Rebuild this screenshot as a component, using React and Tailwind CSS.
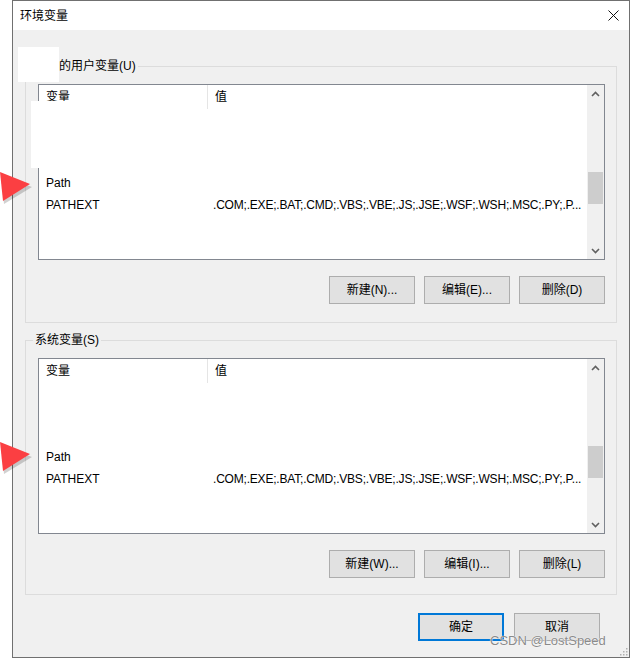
import React from 'react';

const FONT = { fontFamily: '"Liberation Sans", "Noto Sans CJK SC", sans-serif' };

const PATHEXT_VALUE = '.COM;.EXE;.BAT;.CMD;.VBS;.VBE;.JS;.JSE;.WSF;.WSH;.MSC;.PY;.P...';

const Chevron = ({ down = false }) => (
  <svg width="9" height="6" viewBox="0 0 9 6">
    <polyline
      points={down ? '1,1 4.5,4.5 8,1' : '1,5 4.5,1.5 8,5'}
      fill="none"
      stroke="#606060"
      strokeWidth="1.6"
    />
  </svg>
);

const Scrollbar = () => (
  <div className="w-[17px] h-full bg-[#f0f0f0] flex flex-col">
    <div className="h-[17px] flex items-center justify-center">
      <Chevron />
    </div>
    <div className="flex-1 flex flex-col">
      <div className="h-[70px]" />
      <div className="h-[32px] mx-[1px] bg-[#cdcdcd]" />
    </div>
    <div className="h-[17px] flex items-center justify-center">
      <Chevron down />
    </div>
  </div>
);

const Row = ({ name, value }) => (
  <div className="h-[22px] flex items-center whitespace-nowrap">
    <div className="w-[169px] pl-[7px]">{name}</div>
    <div className="pl-[5px] tracking-[-0.2px]">{value}</div>
  </div>
);

const VarList = () => (
  <div className="h-[176px] border border-[#828790] bg-white flex">
    <div className="flex-1 min-w-0 flex flex-col overflow-hidden">
      <div className="h-[24px] flex items-center">
        <div className="w-[169px] h-full pl-[7px] flex items-center border-r border-[#e5e5e5]">变量</div>
        <div className="pl-[7px]">值</div>
      </div>
      <div className="h-[63px]" />
      <Row name="Path" value="" />
      <Row name="PATHEXT" value={PATHEXT_VALUE} />
    </div>
    <Scrollbar />
  </div>
);

const Btn = ({ children, primary = false }) => (
  <button
    className={
      primary
        ? 'w-[86px] h-[28px] bg-[#e1e1e1] border-2 border-[#0078d7] text-[12px] text-black'
        : 'w-[86px] h-[28px] bg-[#e1e1e1] border border-[#adadad] text-[12px] text-black'
    }
  >
    {children}
  </button>
);

// group box with the caption sitting on its top border
const Group = ({ label, labelPad, buttons, className }) => (
  <div className={`relative border border-[#dcdcdc] pt-[17px] pl-[12px] pr-[11px] ${className}`}>
    <div className="absolute left-[7px] -top-[9px] bg-[#f0f0f0] px-[2px] leading-[16px] flex items-center">
      {labelPad && <span className="inline-block w-[24px]" />}
      {label}
    </div>
    <VarList />
    <div className="flex justify-end gap-[9px] mt-[16px]">
      {buttons.map((b) => (
        <Btn key={b}>{b}</Btn>
      ))}
    </div>
  </div>
);

const Arrow = ({ top }) => (
  <svg className="absolute left-0" style={{ top }} width="40" height="40" viewBox="0 0 40 40">
    <polygon points="1,10 32,22 4,39" fill="rgba(0,0,0,0.18)" />
    <polygon points="0,7 30,19 3,36" fill="#fb3f42" />
  </svg>
);

export default function App() {
  return (
    <div className="relative w-[630px] h-[659px] bg-white text-[12px] text-black overflow-hidden" style={FONT}>
      <div className="flex">
        <div className="w-[12px] shrink-0" />
        <div className="w-[618px] h-[658px] border border-[#707070] flex flex-col">
          {/* title bar */}
          <div className="h-[29px] bg-white flex items-center justify-between pl-[7px] pr-[10px]">
            <span className="text-[12px]">环境变量</span>
            <svg width="11" height="11" viewBox="0 0 11 11">
              <path d="M0.5 0.5 L10.5 10.5 M10.5 0.5 L0.5 10.5" stroke="#111" strokeWidth="1" />
            </svg>
          </div>

          {/* body */}
          <div className="flex-1 bg-[#f0f0f0] px-[12px] pt-[36px]">
            <Group
              className="pb-[18px]"
              label="的用户变量(U)"
              labelPad
              buttons={['新建(N)...', '编辑(E)...', '删除(D)']}
            />
            <Group
              className="mt-[17px] pb-[16px]"
              label="系统变量(S)"
              buttons={['新建(W)...', '编辑(I)...', '删除(L)']}
            />
            <div className="flex justify-end gap-[10px] mt-[18px] pr-[17px]">
              <Btn primary>确定</Btn>
              <Btn>取消</Btn>
            </div>
          </div>
        </div>
      </div>

      {/* redaction boxes */}
      <div className="absolute left-[18px] top-[47px] w-[41px] h-[35px] bg-white" />
      <div className="absolute left-[31px] top-[101px] w-[176px] h-[67px] bg-white" />

      {/* red arrows */}
      <Arrow top={165} />
      <Arrow top={435} />

      {/* watermark */}
      <div
        className="absolute left-[490px] top-[633px] text-[13px] text-[#8a8a8a] leading-[16px]"
        style={{ textShadow: '0 0 1px #fff, 0 0 1px #fff' }}
      >
        CSDN @LostSpeed
      </div>

      {/* resize grip */}
      <svg className="absolute left-[619px] top-[647px]" width="9" height="9" viewBox="0 0 9 9">
        <rect x="7" y="1" width="1.5" height="1.5" fill="#b0b0b0" />
        <rect x="4" y="4" width="1.5" height="1.5" fill="#b0b0b0" />
        <rect x="7" y="4" width="1.5" height="1.5" fill="#b0b0b0" />
        <rect x="1" y="7" width="1.5" height="1.5" fill="#b0b0b0" />
        <rect x="4" y="7" width="1.5" height="1.5" fill="#b0b0b0" />
        <rect x="7" y="7" width="1.5" height="1.5" fill="#b0b0b0" />
      </svg>
    </div>
  );
}
